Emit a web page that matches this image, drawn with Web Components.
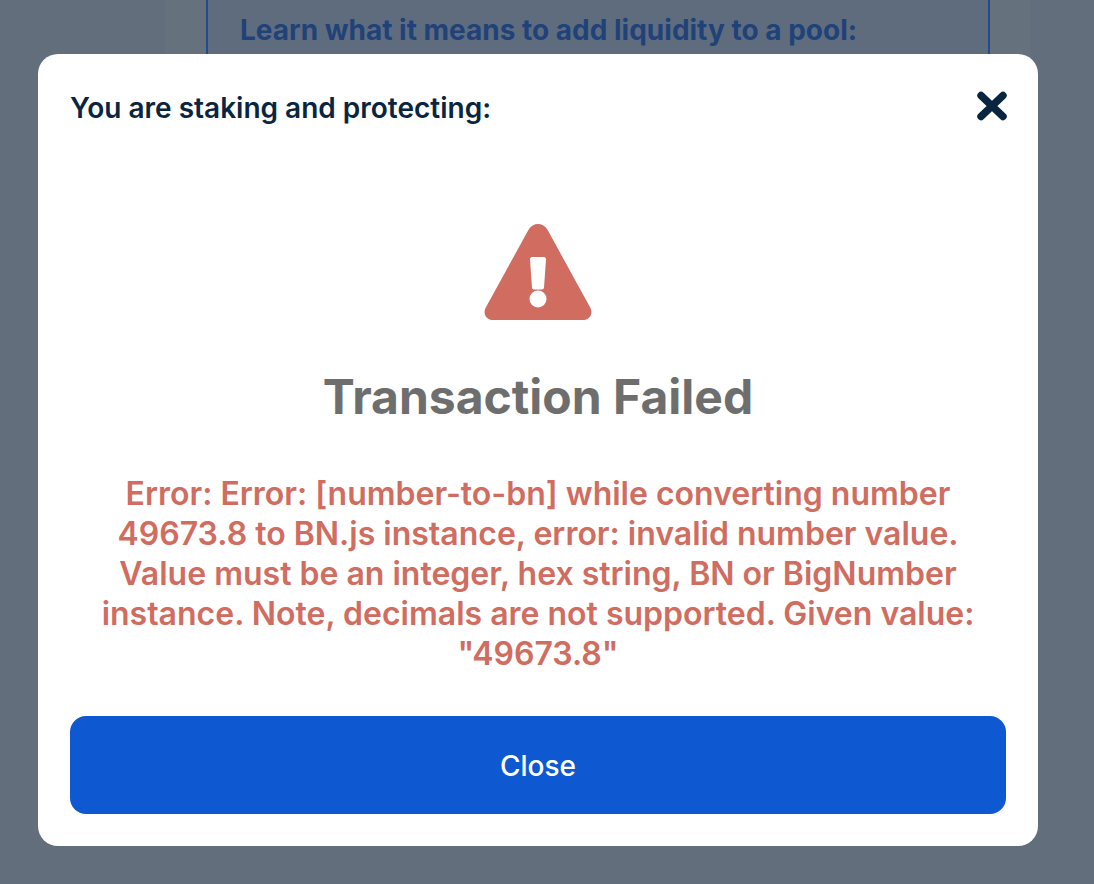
<!DOCTYPE html>
<html>
<head>
<meta charset="utf-8">
<title>Transaction Failed</title>
<style>
  html, body { margin: 0; height: 100%; overflow: hidden; background: #626e7b; font-family: Inter, "Liberation Sans", sans-serif; }
</style>
</head>
<body>
<page-behind>Learn what it means to add liquidity to a pool:</page-behind>
<modal-overlay>
  <tx-dialog heading="You are staking and protecting:">
    <tx-failed title-text="Transaction Failed">Error: Error: [number-to-bn] while converting number 49673.8 to BN.js instance, error: invalid number value. Value must be an integer, hex string, BN or BigNumber instance. Note, decimals are not supported. Given value: "49673.8"</tx-failed>
    <tx-button slot="footer">Close</tx-button>
  </tx-dialog>
</modal-overlay>
<script>
customElements.define('page-behind', class PageBehind extends HTMLElement {
  connectedCallback() {
    const root = this.attachShadow({mode: 'open'})
    root.innerHTML = `
    <style>
      :host { display: block; height: 800px; padding: 0 64px 0 165px; box-sizing: border-box; }
      #column { height: 100%; background: #66717e; padding: 0 40px 0 41px; box-sizing: border-box; }
      #panel {
        height: 100%; box-sizing: border-box;
        background: #5f6c7e;
        border: solid #234a8f; border-width: 0 2px;
        padding: 14px 32px;
        color: #1f4279; font-size: 28px; line-height: 32px; font-weight: 700;
      }
    </style>
    <div id="column"><div id="panel"><slot></slot></div></div>`
  }
})

customElements.define('modal-overlay', class ModalOverlay extends HTMLElement {
  connectedCallback() {
    const root = this.attachShadow({mode: 'open'})
    root.innerHTML = `
    <style>
      :host { position: fixed; inset: 0; display: flex; justify-content: flex-start; align-items: flex-start; padding: 54px 0 0 38px; box-sizing: border-box; }
    </style>
    <slot></slot>`
  }
})

customElements.define('tx-dialog', class TxDialog extends HTMLElement {
  connectedCallback() {
    const heading = this.getAttribute('heading') || ''
    const root = this.attachShadow({mode: 'open'})
    root.innerHTML = `
    <style>
      :host { display: flex; flex-direction: column; width: 1000px; height: 792px; box-sizing: border-box; padding: 32px; background: #fff; border-radius: 20px; }
      header { display: flex; justify-content: space-between; align-items: center; height: 44px; color: #0a2540; }
      h2 { margin: 0; font-size: 28px; line-height: 44px; font-weight: 600; }
      svg { display: block; width: 30px; height: 30px; margin-right: -1px; margin-top: -4px; }
      main { flex: 1; }
    </style>
    <header>
      <h2>${heading}</h2>
      <svg viewBox="0 0 30 30" aria-label="Close"><path d="M4 4.5 26 25.5M26 4.5 4 25.5" fill="none" stroke="#0a2540" stroke-width="7.4" stroke-linecap="round"/></svg>
    </header>
    <main><slot></slot></main>
    <slot name="footer"></slot>`
  }
})

customElements.define('tx-failed', class TxFailed extends HTMLElement {
  connectedCallback() {
    const titleText = this.getAttribute('title-text') || ''
    const root = this.attachShadow({mode: 'open'})
    root.innerHTML = `
    <style>
      :host { display: flex; flex-direction: column; align-items: center; padding-top: 94px; }
      svg { display: block; width: 108px; height: 96px; }
      h1 { margin: 49px 0 0; font-size: 48px; line-height: 56px; font-weight: 700; color: #6e6e6e; }
      p { margin: 49px 0 0; padding: 0 16px; font-size: 32px; line-height: 40px; font-weight: 600; color: #d06d60; text-align: center; }
    </style>
    <svg viewBox="0 0 108 96">
      <path fill="#d06d60" fill-rule="evenodd" d="M44.5 5.800C48.800-1.900 59.200-1.900 63.500 5.800L106.200 83.500C109.600 89.800 105.800 96 98.500 96H9.500C2.200 96-1.600 89.800 1.800 83.500ZM46 35.500 48 63.500C48.100 64.600 49 65.500 50 65.500H58C59 65.500 59.900 64.600 60 63.500L62 35.500C62.100 34 61 33 60 33H48C47 33 45.900 34 46 35.500ZM54 66.500A8.500 8.500 0 1 0 54 83.500 8.500 8.500 0 1 0 54 66.500Z"/>
    </svg>
    <h1>${titleText}</h1>
    <p><slot></slot></p>`
  }
})

customElements.define('tx-button', class TxButton extends HTMLElement {
  connectedCallback() {
    const root = this.attachShadow({mode: 'open'})
    root.innerHTML = `
    <style>
      :host { display: flex; align-items: center; justify-content: center; height: 98px; padding-top: 2px; box-sizing: border-box; background: #0e59d1; border-radius: 16px; color: #fff; font-size: 28px; font-weight: 500; }
    </style>
    <slot></slot>`
  }
})
</script>
</body>
</html>
